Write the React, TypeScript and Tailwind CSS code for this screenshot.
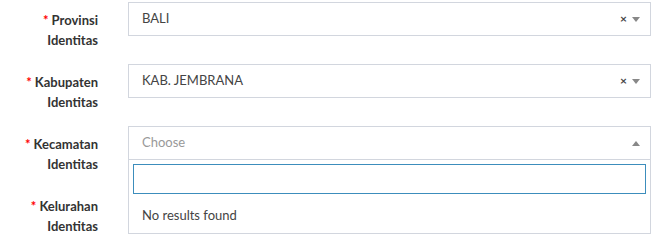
import React from 'react';

const Label: React.FC<{ name: string }> = ({ name }) => (
  <div className="w-[113px] shrink-0 pr-[15px] pt-[8px] text-right text-[13px] font-bold leading-5 text-[#333]">
    <span className="text-[#ff0000]">*</span> {name}
    <br />
    Identitas
  </div>
);

const Arrow: React.FC<{ up?: boolean }> = ({ up }) => (
  <span
    className={
      up
        ? 'h-0 w-0 border-x-4 border-b-[5px] border-x-transparent border-b-[#888]'
        : 'h-0 w-0 border-x-4 border-t-[5px] border-x-transparent border-t-[#888]'
    }
  />
);

const Select: React.FC<{ value?: string; open?: boolean; hidden?: boolean }> = ({ value, open, hidden }) => (
  <div className="relative flex h-[34px] items-center border border-[#d2d6de] bg-white pl-[13px] pr-[10px] text-[13px]">
    <span className={value ? 'flex-1 text-[#444]' : 'flex-1 text-[#999]'}>{hidden ? '' : value ?? 'Choose'}</span>
    {value && <span className="mr-[5px] text-[12px] font-bold leading-none text-[#444]">×</span>}
    <Arrow up={open} />
  </div>
);

const App: React.FC = () => {
  const rows = [
    { name: 'Provinsi', value: 'BALI' },
    { name: 'Kabupaten', value: 'KAB. JEMBRANA' },
    { name: 'Kecamatan', open: true },
    { name: 'Kelurahan', hidden: true },
  ];

  return (
    <div className="h-[237px] w-[666px] overflow-hidden bg-white pt-[2px] font-['Lato',sans-serif]">
      {rows.map((r) => (
        <div key={r.name} className="flex h-[62px] pr-[15px]">
          <Label name={r.name} />
          <div className="relative flex-1 pl-[15px]">
            <Select value={r.value} open={r.open} hidden={r.hidden} />
            {/* dropdown terbuka di atas field berikutnya */}
            {r.open && (
              <div className="absolute left-[15px] right-0 top-[33px] z-10 border border-[#d2d6de] bg-white">
                <div className="p-[4px]">
                  <div className="h-[30px] border border-[#3c8dbc]" />
                </div>
                <div className="h-[35px] px-[13px] pt-[8px] text-[13px] text-[#444]">No results found</div>
              </div>
            )}
          </div>
        </div>
      ))}
    </div>
  );
};

export default App;
